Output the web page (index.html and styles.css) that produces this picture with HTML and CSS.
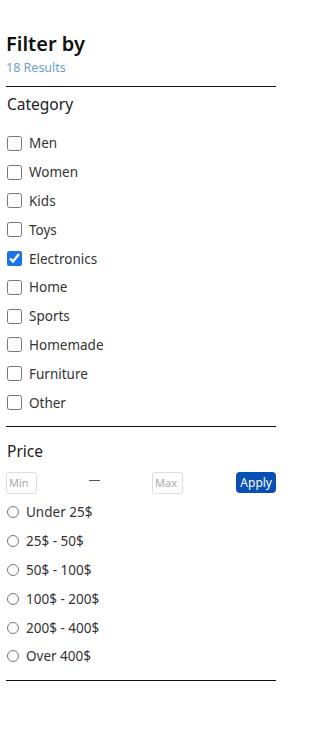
FILE: index.html
```html
<!DOCTYPE html>
<html>
<head>
<meta charset="utf-8">
<link rel="stylesheet" href="styles.css">
</head>
<body>
<aside class="filter">
  <h1 class="title">Filter by</h1>
  <div class="count">18 Results</div>
  <hr class="rule">
  <h2 class="section">Category</h2>
  <ul class="options cats">
    <li><label><input type="checkbox"><span>Men</span></label></li>
    <li><label><input type="checkbox"><span>Women</span></label></li>
    <li><label><input type="checkbox"><span>Kids</span></label></li>
    <li><label><input type="checkbox"><span>Toys</span></label></li>
    <li><label><input type="checkbox" checked><span>Electronics</span></label></li>
    <li><label><input type="checkbox"><span>Home</span></label></li>
    <li><label><input type="checkbox"><span>Sports</span></label></li>
    <li><label><input type="checkbox"><span>Homemade</span></label></li>
    <li><label><input type="checkbox"><span>Furniture</span></label></li>
    <li><label><input type="checkbox"><span>Other</span></label></li>
  </ul>
  <hr class="rule">
  <h2 class="section price">Price</h2>
  <div class="range">
    <input class="num" type="text" placeholder="Min">
    <span class="dash"></span>
    <input class="num" type="text" placeholder="Max">
    <button class="apply">Apply</button>
  </div>
  <ul class="options prices">
    <li><label><input type="radio" name="p"><span>Under 25$</span></label></li>
    <li><label><input type="radio" name="p"><span>25$ - 50$</span></label></li>
    <li><label><input type="radio" name="p"><span>50$ - 100$</span></label></li>
    <li><label><input type="radio" name="p"><span>100$ - 200$</span></label></li>
    <li><label><input type="radio" name="p"><span>200$ - 400$</span></label></li>
    <li><label><input type="radio" name="p"><span>Over 400$</span></label></li>
  </ul>
  <hr class="rule">
</aside>
</body>
</html>
```
FILE: styles.css
```css
* { box-sizing: border-box; }
body {
  margin: 0;
  background: #fff;
  font-family: "Noto Sans", "DejaVu Sans", sans-serif;
  color: #333;
}
.filter {
  width: 276px;
  padding: 32px 0 0 6px;
}
.title {
  margin: 0;
  font-size: 20px;
  line-height: 24px;
  font-weight: 600;
  color: #111;
}
.count {
  font-size: 12.5px;
  line-height: 16px;
  color: #6f9fcf;
  margin-top: 4px;
}
.rule {
  margin: 0;
  border: 0;
  border-top: 1px solid #111;
  width: 270px;
}
.count + .rule { margin-top: 10px; }
.section {
  margin: 7px 0 0 1px;
  font-size: 15.5px;
  line-height: 20px;
  font-weight: 400;
  color: #222;
}
.section.price { margin-top: 14px; }
.options {
  list-style: none;
  margin: 0;
  padding: 0;
}
.options li { height: 28.8px; display: flex; align-items: center; }
.options label { display: flex; align-items: center; gap: 7px; font-size: 13.5px; color: #333; }
.cats { margin-top: 15px; }
.cats input {
  width: 15px; height: 15px; margin: 0 0 0 1px;
  accent-color: #1a73e8;
}
.cats + .rule { margin-top: 9px; }
.prices { margin-top: 4px; }
.prices input { width: 12px; height: 12px; margin: 0 0 0 1px; }
.prices label { gap: 7px; }
.range {
  display: flex;
  align-items: center;
  margin-top: 11px;
  width: 270px;
}
.num {
  width: 31px;
  height: 22px;
  border: 1px solid #ddd;
  border-radius: 3px;
  padding: 0 2px;
  font-family: inherit;
  font-size: 11px;
  color: #333;
}
.num::placeholder { color: #aaa; }
.dash {
  width: 11px;
  height: 1px;
  background: #555;
  margin: 0 52px 4px 52px;
}
.apply {
  margin-left: auto;
  height: 21px;
  padding: 0 4px;
  border: 0;
  border-radius: 4px;
  background: #0a4fb5;
  color: #fff;
  font-family: inherit;
  font-size: 12px;
}
.prices + .rule { margin-top: 9px; }
```
